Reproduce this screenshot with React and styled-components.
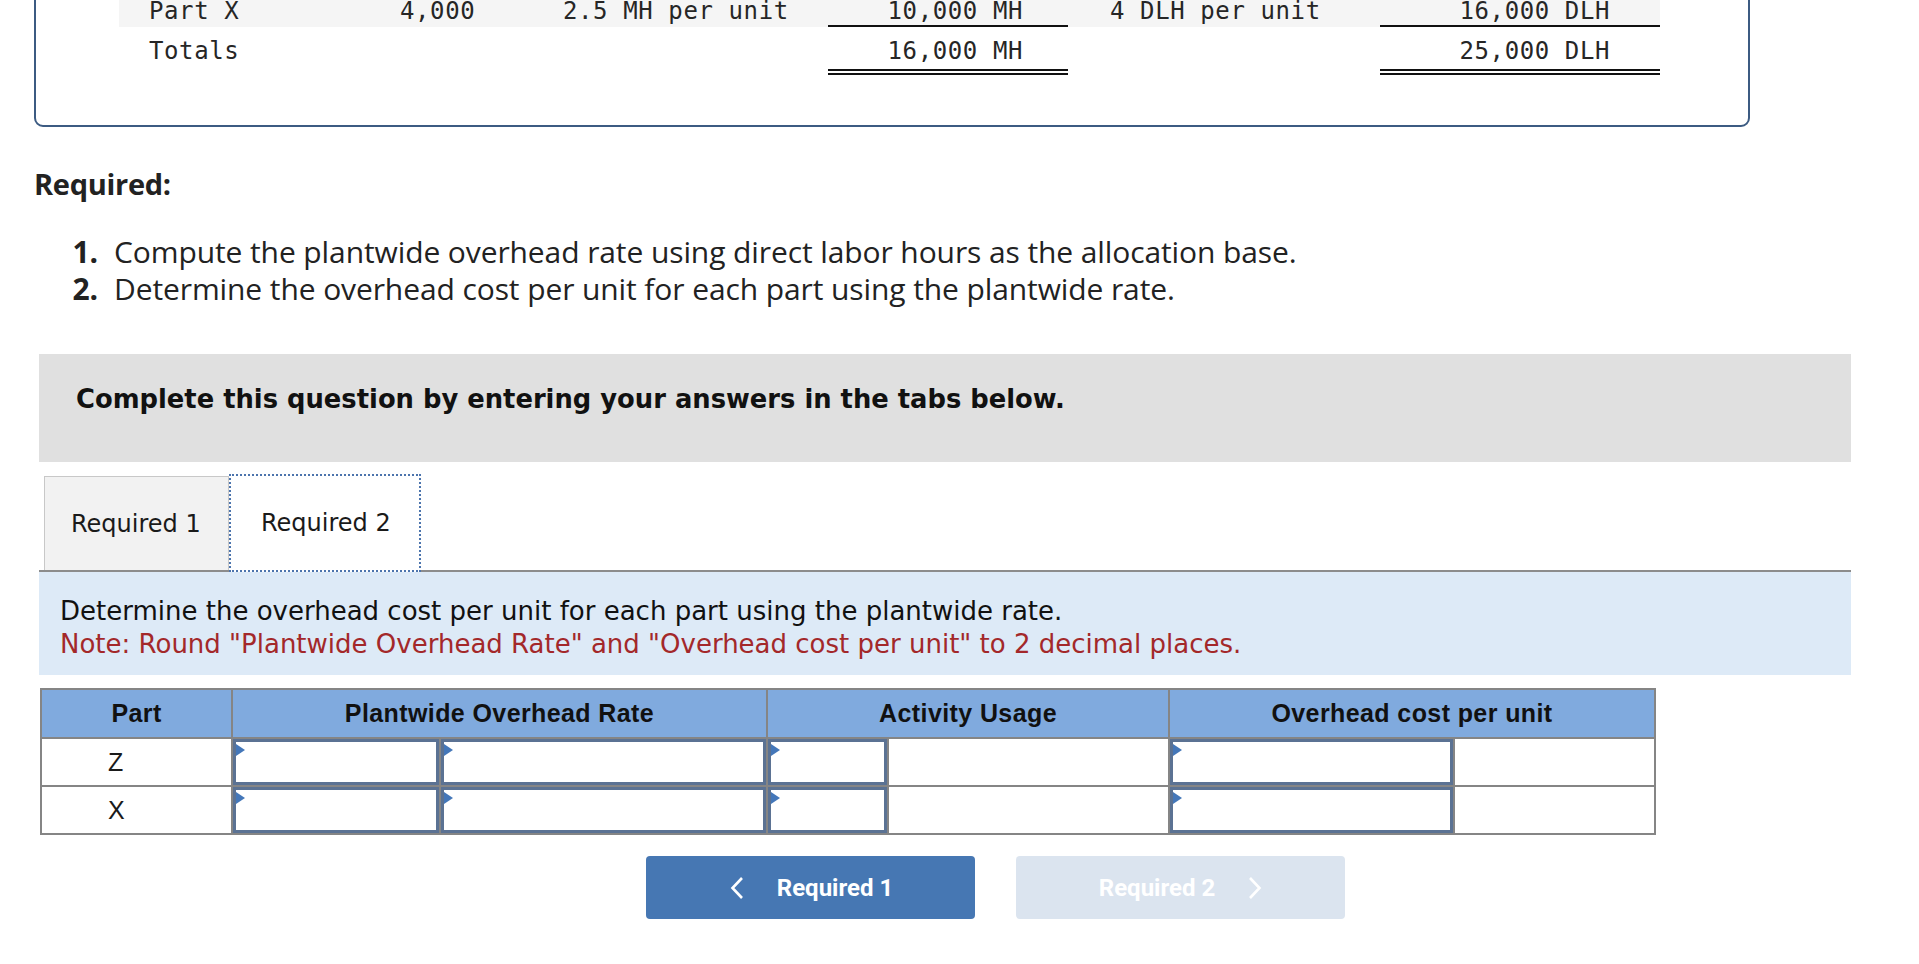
import React from "react";
import styled, { createGlobalStyle } from "styled-components";

const Global = createGlobalStyle`
  html, body { margin: 0; padding: 0; background: #fff; }
  body { font-family: "Liberation Sans", Arial, sans-serif; color: #1f1f1f; overflow: hidden; }
  * { box-sizing: border-box; }
`;

const Page = styled.div`
  width: 1919px;
  height: 964px;
  overflow: hidden;
`;

/* ---------- data box (scrolled, top cut off) ---------- */
const DataBox = styled.div`
  margin: -30px 0 0 34px;
  width: 1716px;
  border: 2px solid #3c5b82;
  border-radius: 0 0 9px 9px;
  padding: 19px 0 50px 83px;
`;

const LedgerRow = styled.div`
  display: grid;
  grid-template-columns: 281px 100px 328px 240px 312px 280px;
  width: 1541px;
  background: ${(p) => (p.$shade ? "#f5f5f5" : "transparent")};
`;

const LedgerCell = styled.div`
  font-family: "DejaVu Sans Mono", "Liberation Mono", monospace;
  font-size: 24px;
  letter-spacing: 0.6px;
  line-height: 28px;
  color: #262626;
  white-space: pre;
  text-align: ${(p) => p.$align || "left"};
  padding: ${(p) => (p.$total ? "10px 0 4px" : "6px 0 0")};
  padding-left: ${(p) => p.$pl || 0}px;
  padding-right: ${(p) => p.$pr || 0}px;
  border-bottom: ${(p) =>
    p.$total
      ? p.$rule
        ? "6px double #111"
        : "6px solid transparent"
      : p.$rule
      ? "2px solid #111"
      : "2px solid transparent"};
`;

/* ---------- main content ---------- */
const Main = styled.main`
  padding-left: 34px;
`;

const Heading = styled.h2`
  margin: 41px 0 0;
  font-family: "Open Sans", Lato, sans-serif;
  font-weight: 700;
  font-size: 29px;
  line-height: 32px;
  letter-spacing: -0.3px;
  color: #222;
`;

const Steps = styled.ol`
  list-style: none;
  margin: 33px 0 0;
  padding: 0;
`;

const Step = styled.li`
  display: flex;
  font-family: "Open Sans", Lato, sans-serif;
  font-size: 30px;
  line-height: 37px;
  letter-spacing: -0.1px;
  color: #222;
`;

const StepNum = styled.span`
  width: 64px;
  margin-right: 16px;
  text-align: right;
  font-weight: 700;
`;

const Workspace = styled.section`
  margin: 47px 0 0 5px;
  width: 1812px;
`;

const Banner = styled.div`
  height: 108px;
  background: #e0e0e0;
  padding: 30px 0 0 37px;
  font-family: "DejaVu Sans", Verdana, sans-serif;
  font-weight: 700;
  font-size: 25.8px;
  line-height: 30px;
  color: #111;
`;

const TabStrip = styled.div`
  display: flex;
  align-items: flex-end;
  margin-top: 12px;
  padding-left: 5px;
  border-bottom: 2px solid #8c8c8c;
`;

const Tab = styled.div`
  font-family: "DejaVu Sans", Verdana, sans-serif;
  font-size: 24px;
  color: #1a1a1a;
  display: flex;
  align-items: center;
  ${(p) =>
    p.$active
      ? `
    width: 192px;
    height: 98px;
    margin-bottom: -2px;
    padding-left: 30px;
    background: #fff;
    border: 2px dotted #4c74ad;
  `
      : `
    width: 185px;
    height: 94px;
    padding-left: 26px;
    background: #f2f2f2;
    border: 1px solid #c8c8c8;
    border-bottom: none;
  `}
`;

const Info = styled.div`
  background: #ddeaf7;
  padding: 23px 21px 14px;
  font-family: "DejaVu Sans", Verdana, sans-serif;
  font-size: 26px;
  line-height: 33px;
  color: #111;
`;

const Note = styled.div`
  color: #a3282a;
`;

/* ---------- answer table ---------- */
const AnswerTable = styled.table`
  margin: 13px 0 0 1px;
  border-collapse: collapse;
  table-layout: fixed;
  width: 1614px;
  font-family: "Liberation Sans", Arial, sans-serif;
`;

const HeadCell = styled.th`
  height: 49px;
  background: #80aade;
  border: 2px solid #858585;
  font-size: 25px;
  font-weight: 700;
  letter-spacing: 0.4px;
  color: #111;
  text-align: center;
  padding: 0;
`;

const BodyCell = styled.td`
  height: 48px;
  border: 2px solid #858585;
  font-size: 25px;
  text-align: ${(p) => (p.$label ? "left" : "center")};
  padding: 0 0 0 ${(p) => (p.$label ? 66 : 0)}px;
  color: #1a1a1a;
`;

const InputCell = styled.td`
  height: 48px;
  border: 2px solid #858585;
  padding: 0;
  position: relative;
`;

const Field = styled.div`
  position: absolute;
  inset: 0;
  border: 3px solid #5b7293;
  background: #fff;
  &::before {
    content: "";
    position: absolute;
    left: 0;
    top: 2px;
    border-left: 9px solid #4477b9;
    border-top: 6px solid transparent;
    border-bottom: 6px solid transparent;
  }
`;

/* ---------- navigation buttons ---------- */
const NavRow = styled.div`
  display: flex;
  gap: 41px;
  margin: 21px 0 0 607px;
`;

const NavButton = styled.button`
  width: 329px;
  height: 63px;
  border: none;
  border-radius: 4px;
  background: ${(p) => (p.$disabled ? "#dbe4ef" : "#4677b3")};
  color: #fff;
  font-family: Roboto, "Liberation Sans", sans-serif;
  font-weight: 700;
  font-size: 24px;
  display: flex;
  align-items: center;
  justify-content: center;
  gap: 33px;
  padding: 0 0 0 ${(p) => (p.$disabled ? 0 : 2)}px;
  cursor: pointer;
`;

const Chevron = ({ dir }) => (
  <svg width="14" height="24" viewBox="0 0 14 24" fill="none">
    <polyline
      points={dir === "left" ? "12,2 2.5,12 12,22" : "2,2 11.5,12 2,22"}
      stroke="#fff"
      strokeWidth="2.6"
      strokeLinejoin="miter"
    />
  </svg>
);

const ledger = [
  {
    shade: true,
    cells: ["Part X", "4,000", "2.5 MH per unit", "10,000 MH", "4 DLH per unit", "16,000 DLH"],
  },
  { shade: false, total: true, cells: ["Totals", "", "", "16,000 MH", "", "25,000 DLH"] },
];

const colSpec = [
  { align: "left", pl: 30 },
  { align: "right", pr: 25 },
  { align: "left", pl: 63 },
  { align: "right", pr: 45, rule: true },
  { align: "left", pl: 42 },
  { align: "right", pr: 50, rule: true },
];

const colWidths = [191, 208, 327, 121, 281, 285, 201];

export default function App() {
  return (
    <Page>
      <Global />
      <DataBox>
        {ledger.map((row, ri) => (
          <LedgerRow key={ri} $shade={row.shade}>
            {row.cells.map((c, ci) => (
              <LedgerCell
                key={ci}
                $total={row.total}
                $align={colSpec[ci].align}
                $pl={colSpec[ci].pl}
                $pr={colSpec[ci].pr}
                $rule={colSpec[ci].rule}
              >
                {c}
              </LedgerCell>
            ))}
          </LedgerRow>
        ))}
      </DataBox>

      <Main>
        <Heading>Required:</Heading>
        <Steps>
          <Step>
            <StepNum>1.</StepNum>
            <span>Compute the plantwide overhead rate using direct labor hours as the allocation base.</span>
          </Step>
          <Step>
            <StepNum>2.</StepNum>
            <span>Determine the overhead cost per unit for each part using the plantwide rate.</span>
          </Step>
        </Steps>

        <Workspace>
          <Banner>Complete this question by entering your answers in the tabs below.</Banner>
          <TabStrip>
            <Tab>Required 1</Tab>
            <Tab $active>Required 2</Tab>
          </TabStrip>
          <Info>
            <div>Determine the overhead cost per unit for each part using the plantwide rate.</div>
            <Note>Note: Round "Plantwide Overhead Rate" and "Overhead cost per unit" to 2 decimal places.</Note>
          </Info>

          <AnswerTable>
            <colgroup>
              {colWidths.map((w, i) => (
                <col key={i} style={{ width: w }} />
              ))}
            </colgroup>
            <thead>
              <tr>
                <HeadCell>Part</HeadCell>
                <HeadCell colSpan={2}>Plantwide Overhead Rate</HeadCell>
                <HeadCell colSpan={2}>Activity Usage</HeadCell>
                <HeadCell colSpan={2}>Overhead cost per unit</HeadCell>
              </tr>
            </thead>
            <tbody>
              {["Z", "X"].map((p) => (
                <tr key={p}>
                  <BodyCell $label>{p}</BodyCell>
                  <InputCell><Field /></InputCell>
                  <InputCell><Field /></InputCell>
                  <InputCell><Field /></InputCell>
                  <BodyCell />
                  <InputCell><Field /></InputCell>
                  <BodyCell />
                </tr>
              ))}
            </tbody>
          </AnswerTable>

          <NavRow>
            <NavButton>
              <Chevron dir="left" />
              <span>Required 1</span>
            </NavButton>
            <NavButton $disabled>
              <span>Required 2</span>
              <Chevron dir="right" />
            </NavButton>
          </NavRow>
        </Workspace>
      </Main>
    </Page>
  );
}
